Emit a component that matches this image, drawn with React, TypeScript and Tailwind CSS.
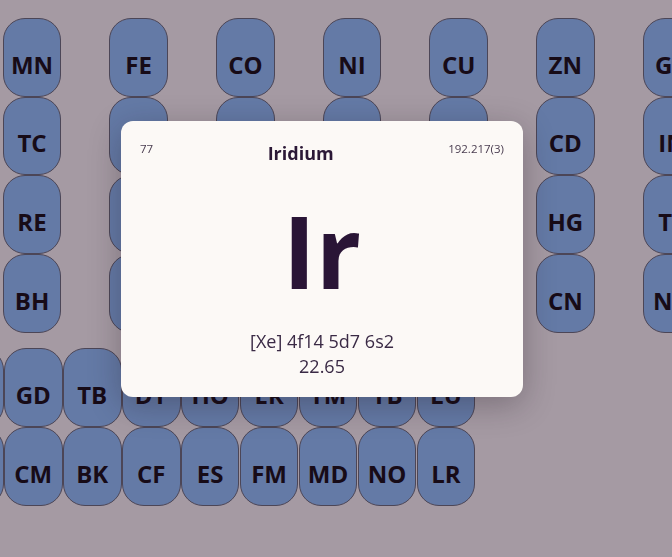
import React from 'react';

const mainRows: string[][] = [
  ['MN', 'FE', 'CO', 'NI', 'CU', 'ZN', 'GA'],
  ['TC', 'RU', 'RH', 'PD', 'AG', 'CD', 'IN'],
  ['RE', 'OS', 'IR', 'PT', 'AU', 'HG', 'TL'],
  ['BH', 'HS', 'MT', 'DS', 'RG', 'CN', 'NH'],
];

const fRows: string[][] = [
  ['EU', 'GD', 'TB', 'DY', 'HO', 'ER', 'TM', 'YB', 'LU'],
  ['AM', 'CM', 'BK', 'CF', 'ES', 'FM', 'MD', 'NO', 'LR'],
];

const Tile: React.FC<{ symbol: string }> = ({ symbol }) => {
  return (
    <div className="flex h-[78.67px] w-[58.67px] shrink-0 flex-col items-center justify-end rounded-[22px] border border-[#4c4657] bg-[#647aa6] pb-[15px]">
      <span className="text-2xl leading-8 font-bold text-[#170b17]">{symbol}</span>
    </div>
  );
};

const ElementCard: React.FC = () => {
  return (
    <div className="fixed top-[121px] left-[121px] w-[402px] rounded-xl bg-[#fcf9f6] px-[19px] pt-5 pb-[18px] shadow-[0_8px_32px_rgba(30,20,30,0.3)]">
      <div className="flex items-start justify-between">
        <span className="text-[11.5px] leading-4 text-[#4a3d50]">77</span>
        <span className="text-lg leading-6 font-bold text-[#2b1836]">Iridium</span>
        <span className="text-[11.5px] leading-4 text-[#4a3d50]">192.217(3)</span>
      </div>
      <div className="mt-[35px] text-center text-[100px] leading-none font-bold text-[#2a1536]">Ir</div>
      <div className="mt-[29px] text-center text-lg leading-snug text-[#3a2a45]">
        <p>[Xe] 4f14 5d7 6s2</p>
        <p>22.65</p>
      </div>
    </div>
  );
};

const App: React.FC = () => {
  return (
    <div className="h-screen w-full overflow-hidden bg-[#a59aa3] pt-[18px] font-['Open_Sans',sans-serif]">
      <div className="flex flex-col pl-[2.7px]">
        {mainRows.map((row, i) => (
          <div key={i} className="flex gap-[48px]">
            {row.map((s) => (
              <Tile key={s} symbol={s} />
            ))}
          </div>
        ))}
      </div>

      <div className="mt-[15.7px] -ml-[55px] flex flex-col">
        {fRows.map((row, i) => (
          <div key={i} className="flex gap-[0.3px]">
            {row.map((s) => (
              <Tile key={s} symbol={s} />
            ))}
          </div>
        ))}
      </div>

      <ElementCard />
    </div>
  );
};

export default App;
